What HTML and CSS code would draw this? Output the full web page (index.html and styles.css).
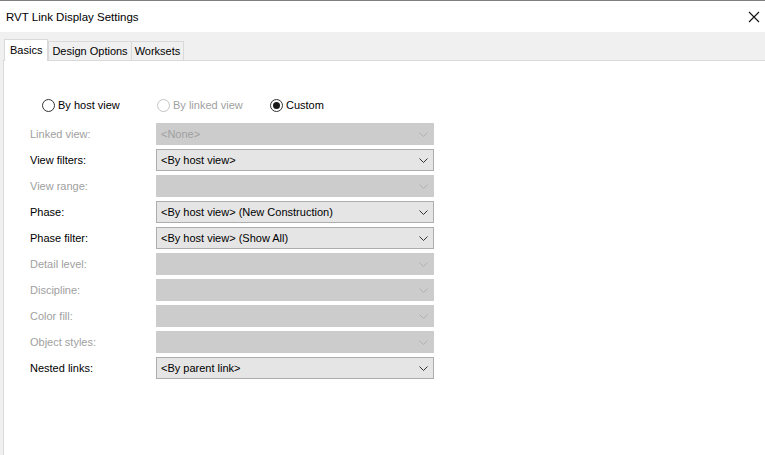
FILE: index.html
```html
<!DOCTYPE html>
<html>
<head>
<meta charset="utf-8">
<link rel="stylesheet" href="styles.css">
</head>
<body>
<div class="window">
  <div class="titlebar">
    <span class="title">RVT Link Display Settings</span>
    <svg class="close" width="12" height="12" viewBox="0 0 12 12"><path d="M1 1 L11 11 M11 1 L1 11" stroke="#111" stroke-width="1.1" fill="none"/></svg>
  </div>
  <div class="tabbar">
    <div class="tab active">Basics</div>
    <div class="tab">Design Options</div>
    <div class="tab">Worksets</div>
  </div>
  <div class="panel">
    <div class="radios">
      <label class="radio"><span class="circle"></span>By host view</label>
      <label class="radio disabled"><span class="circle"></span>By linked view</label>
      <label class="radio"><span class="circle checked"></span>Custom</label>
    </div>
    <div class="form">
      <div class="lbl disabled">Linked view:</div>
      <div class="select disabled"><span>&lt;None&gt;</span><svg class="chev" width="9" height="5" viewBox="0 0 9 5"><path d="M0.5 0.5 L4.5 4.5 L8.5 0.5" fill="none"/></svg></div>
      <div class="lbl">View filters:</div>
      <div class="select"><span>&lt;By host view&gt;</span><svg class="chev" width="9" height="5" viewBox="0 0 9 5"><path d="M0.5 0.5 L4.5 4.5 L8.5 0.5" fill="none"/></svg></div>
      <div class="lbl disabled">View range:</div>
      <div class="select disabled"><span></span><svg class="chev" width="9" height="5" viewBox="0 0 9 5"><path d="M0.5 0.5 L4.5 4.5 L8.5 0.5" fill="none"/></svg></div>
      <div class="lbl">Phase:</div>
      <div class="select"><span>&lt;By host view&gt; (New Construction)</span><svg class="chev" width="9" height="5" viewBox="0 0 9 5"><path d="M0.5 0.5 L4.5 4.5 L8.5 0.5" fill="none"/></svg></div>
      <div class="lbl">Phase filter:</div>
      <div class="select"><span>&lt;By host view&gt; (Show All)</span><svg class="chev" width="9" height="5" viewBox="0 0 9 5"><path d="M0.5 0.5 L4.5 4.5 L8.5 0.5" fill="none"/></svg></div>
      <div class="lbl disabled">Detail level:</div>
      <div class="select disabled"><span></span><svg class="chev" width="9" height="5" viewBox="0 0 9 5"><path d="M0.5 0.5 L4.5 4.5 L8.5 0.5" fill="none"/></svg></div>
      <div class="lbl disabled">Discipline:</div>
      <div class="select disabled"><span></span><svg class="chev" width="9" height="5" viewBox="0 0 9 5"><path d="M0.5 0.5 L4.5 4.5 L8.5 0.5" fill="none"/></svg></div>
      <div class="lbl disabled">Color fill:</div>
      <div class="select disabled"><span></span><svg class="chev" width="9" height="5" viewBox="0 0 9 5"><path d="M0.5 0.5 L4.5 4.5 L8.5 0.5" fill="none"/></svg></div>
      <div class="lbl disabled">Object styles:</div>
      <div class="select disabled"><span></span><svg class="chev" width="9" height="5" viewBox="0 0 9 5"><path d="M0.5 0.5 L4.5 4.5 L8.5 0.5" fill="none"/></svg></div>
      <div class="lbl">Nested links:</div>
      <div class="select"><span>&lt;By parent link&gt;</span><svg class="chev" width="9" height="5" viewBox="0 0 9 5"><path d="M0.5 0.5 L4.5 4.5 L8.5 0.5" fill="none"/></svg></div>
    </div>
  </div>
</div>
</body>
</html>
```
FILE: styles.css
```css
html, body {
  margin: 0;
  padding: 0;
  background: #ffffff;
}
body {
  font-family: "Liberation Sans", Arial, sans-serif;
  font-size: 11px;
  color: #000;
  width: 765px;
  height: 455px;
  overflow: hidden;
}
.window {
  display: flex;
  flex-direction: column;
  height: 455px;
  border-top: 1px solid #7f7f7f;
  box-sizing: border-box;
  background: #f0f0f0;
}
.titlebar {
  height: 31px;
  background: #ffffff;
  display: flex;
  align-items: center;
  justify-content: space-between;
  padding: 0 5px 0 6px;
  flex: none;
}
.title {
  font-size: 11.5px;
  color: #000;
}
.tabbar {
  height: 28px;
  flex: none;
  display: flex;
  align-items: flex-end;
  padding-left: 4px;
  background: #f0f0f0;
}
.tab {
  height: 18px;
  line-height: 19px;
  padding: 0 3px;
  border: 1px solid #d9d9d9;
  border-bottom: none;
  background: #f0f0f0;
  margin-left: -1px;
}
.tab.active {
  height: 21px;
  line-height: 20px;
  background: #ffffff;
  margin-left: 0;
  margin-bottom: -1px;
  position: relative;
  z-index: 1;
  padding: 0 5px;
  margin-right: 1px;
}
.panel {
  flex: 1;
  margin-left: 3px;
  background: #ffffff;
  border: 1px solid #d9d9d9;
  border-right: none;
  border-bottom: none;
  padding: 37px 0 0 26px;
}
.radios {
  display: flex;
  align-items: center;
  padding-left: 12px;
  height: 14px;
}
.radio {
  display: flex;
  align-items: center;
  gap: 3px;
}
.radio:nth-child(1) { width: 115px; }
.radio:nth-child(2) { width: 113px; }
.circle {
  width: 11px;
  height: 11px;
  border: 1px solid #333;
  border-radius: 50%;
  background: #fff;
  position: relative;
}
.circle.checked::after {
  content: "";
  position: absolute;
  left: 2px;
  top: 2px;
  width: 7px;
  height: 7px;
  border-radius: 50%;
  background: #1a1a1a;
}
.radio.disabled { color: #a0a0a0; }
.radio.disabled .circle { border-color: #c4c4c4; }
.form {
  margin-top: 11px;
  display: grid;
  grid-template-columns: 126px 278px;
  grid-auto-rows: 22px;
  row-gap: 4px;
  align-items: center;
}
.lbl.disabled { color: #a0a0a0; }
.select {
  height: 22px;
  box-sizing: border-box;
  border: 1px solid #adadad;
  background: #e5e5e5;
  display: flex;
  align-items: center;
  justify-content: space-between;
  padding: 0 5px 0 4px;
}
.select .chev path { stroke: #333; stroke-width: 1; }
.select.disabled {
  background: #cccccc;
  border-color: #cccccc;
  color: #a0a0a0;
}
.select.disabled .chev path { stroke: #b0b0b0; }
```
